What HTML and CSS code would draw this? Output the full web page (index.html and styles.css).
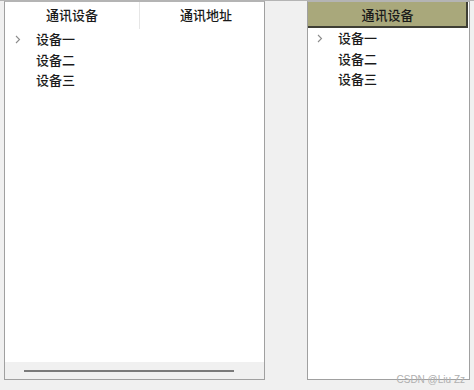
FILE: index.html
```html
<!DOCTYPE html>
<html lang="zh">
<head>
<meta charset="utf-8">
<link rel="stylesheet" href="styles.css">
</head>
<body>
<div class="page">
  <div class="panel panel-left">
    <div class="header">
      <div class="col col-1">通讯设备</div>
      <div class="col col-2">通讯地址</div>
    </div>
    <div class="list">
      <div class="row"><span class="exp"><svg width="6" height="9" viewBox="0 0 6 9"><polyline points="1,1 4.5,4.5 1,8" fill="none" stroke="#8c8c8c" stroke-width="1.1"/></svg></span><span class="label">设备一</span></div>
      <div class="row"><span class="exp"></span><span class="label">设备二</span></div>
      <div class="row"><span class="exp"></span><span class="label">设备三</span></div>
    </div>
    <div class="hscroll"><div class="thumb"></div></div>
  </div>
  <div class="panel panel-right">
    <div class="header-olive">通讯设备</div>
    <div class="list">
      <div class="row"><span class="exp"><svg width="6" height="9" viewBox="0 0 6 9"><polyline points="1,1 4.5,4.5 1,8" fill="none" stroke="#8c8c8c" stroke-width="1.1"/></svg></span><span class="label">设备一</span></div>
      <div class="row"><span class="exp"></span><span class="label">设备二</span></div>
      <div class="row"><span class="exp"></span><span class="label">设备三</span></div>
    </div>
    <div class="watermark">CSDN @Liu Zz</div>
  </div>
</div>
</body>
</html>
```
FILE: styles.css
```css
html, body {
  margin: 0;
  padding: 0;
}
body {
  background: #f0f0f0;
  width: 474px;
  height: 390px;
  overflow: hidden;
  font-family: "Noto Sans CJK SC", "Noto Sans", sans-serif;
  font-size: 13px;
  font-weight: 500;
  color: #1a1a1a;
  border-top: 1px solid #b4b4b4;
  box-sizing: border-box;
}
.page {
  display: flex;
  padding-left: 4px;
  gap: 42px;
  height: 379px;
}
.panel {
  box-sizing: border-box;
  height: 379px;
  background: #ffffff;
  border: 1px solid #a0a0a0;
  border-top: 1px solid #b4b4b4;
  display: flex;
  flex-direction: column;
  position: relative;
}
.panel-left {
  width: 261px;
  overflow: hidden;
}
.panel-right {
  width: 163px;
}
.header {
  display: flex;
  height: 27px;
  flex: none;
}
.col {
  display: flex;
  align-items: center;
  justify-content: center;
  height: 100%;
  box-sizing: border-box;
  flex: none;
  padding-bottom: 2px;
}
.col-1 {
  width: 135px;
  border-right: 1px solid #e6e6e6;
}
.col-2 {
  width: 132px;
}
.list {
  flex: 1;
  padding-top: 0;
}
.row {
  display: flex;
  align-items: center;
  height: 20.5px;
}
.exp {
  display: flex;
  justify-content: flex-end;
  box-sizing: border-box;
  flex: none;
}
.exp svg {
  display: block;
  margin-right: 15px;
}
.panel-left .exp {
  width: 31px;
}
.panel-right .exp {
  width: 30px;
}
.label {
  line-height: 20px;
}
.hscroll {
  flex: none;
  height: 17px;
  background: #f0f0f0;
  display: flex;
  align-items: center;
  padding-left: 19px;
}
.thumb {
  width: 210px;
  height: 2px;
  background: #7a7a7a;
}
.header-olive {
  flex: none;
  height: 26px;
  margin-right: 1px;
  box-sizing: border-box;
  background: #a9a87b;
  border-right: 2px solid #3e3e34;
  border-bottom: 2px solid #3e3e34;
  display: flex;
  align-items: center;
  justify-content: center;
  padding-left: 1px;
}
.watermark {
  position: absolute;
  right: 4px;
  bottom: -7px;
  font-family: "Liberation Sans", Arial, sans-serif;
  font-weight: 400;
  font-size: 10px;
  color: #b0b0b0;
  line-height: 12px;
}
```
